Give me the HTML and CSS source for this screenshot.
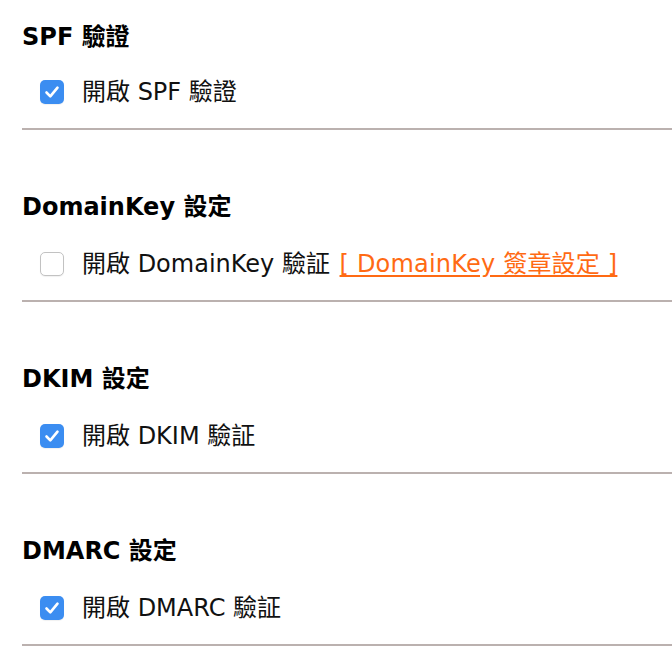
FILE: index.html
```html
<!DOCTYPE html>
<html lang="zh-Hant">
<head>
    <meta charset="UTF-8">
    <meta name="viewport" content="width=device-width, initial-scale=1.0">
    <title>郵件驗證設定</title>
    <link rel="stylesheet" href="styles.css">
</head>
<body>
    <div class="settings">
        <!-- SPF -->
        <section class="auth-block">
            <h3>SPF 驗證</h3>
            <label class="check-row">
                <span class="box checked">
                    <svg viewBox="0 0 24 24" width="24" height="24"><path d="M6.5 12.5l3.8 3.8 7.2-8.6" fill="none" stroke="#fff" stroke-width="2.6" stroke-linecap="round" stroke-linejoin="round"/></svg>
                </span>
                <span>開啟 SPF 驗證</span>
            </label>
        </section>

        <!-- DomainKey -->
        <section class="auth-block">
            <h3>DomainKey 設定</h3>
            <label class="check-row">
                <span class="box"></span>
                <span>開啟 DomainKey 驗証 <a href="#" class="sign-link">[ DomainKey 簽章設定 ]</a></span>
            </label>
        </section>

        <!-- DKIM -->
        <section class="auth-block">
            <h3>DKIM 設定</h3>
            <label class="check-row">
                <span class="box checked">
                    <svg viewBox="0 0 24 24" width="24" height="24"><path d="M6.5 12.5l3.8 3.8 7.2-8.6" fill="none" stroke="#fff" stroke-width="2.6" stroke-linecap="round" stroke-linejoin="round"/></svg>
                </span>
                <span>開啟 DKIM 驗証</span>
            </label>
        </section>

        <!-- DMARC -->
        <section class="auth-block">
            <h3>DMARC 設定</h3>
            <label class="check-row">
                <span class="box checked">
                    <svg viewBox="0 0 24 24" width="24" height="24"><path d="M6.5 12.5l3.8 3.8 7.2-8.6" fill="none" stroke="#fff" stroke-width="2.6" stroke-linecap="round" stroke-linejoin="round"/></svg>
                </span>
                <span>開啟 DMARC 驗証</span>
            </label>
        </section>
    </div>
</body>
</html>
```

FILE: styles.css
```css
/* General styling */
body {
    margin: 0;
    padding: 0;
    background-color: #ffffff;
    color: #111111;
    font-family: "DejaVu Sans", Verdana, "Noto Sans CJK TC", sans-serif;
}

.settings {
    padding: 22px 0 0 22px;
}

.auth-block {
    border-bottom: 2px solid #bbb1af;
    padding-bottom: 21px;
    margin-bottom: 62px;
}

.auth-block h3 {
    margin: 0 0 27px 0;
    font-size: 24px;
    line-height: 30px;
    font-weight: bold;
    color: #000000;
}

.auth-block:first-child h3 {
    margin-bottom: 25px;
}

.check-row {
    display: flex;
    align-items: center;
    gap: 18px;
    padding-left: 18px;
    font-size: 24px;
    line-height: 30px;
    cursor: pointer;
}

.box {
    width: 24px;
    height: 24px;
    box-sizing: border-box;
    border-radius: 5px;
    border: 1px solid #c2c2c2;
    background-color: #ffffff;
    box-shadow: 0 1px 1px rgba(0, 0, 0, 0.06);
    flex-shrink: 0;
}

.box.checked {
    border: none;
    background-color: #3b8df1;
}

.box svg {
    display: block;
}

.sign-link {
    margin-left: 2px;
    color: #ff6a13;
    letter-spacing: 0.2px;
    text-decoration: underline;
    text-underline-offset: 3px;
}
```
